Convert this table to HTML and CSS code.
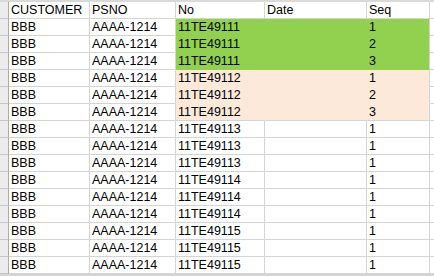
FILE: index.html
```html
<!DOCTYPE html>
<html>
<head>
<meta charset="utf-8">
<link rel="stylesheet" href="styles.css">
</head>
<body>
<div class="sheet">
  <div class="topbar"></div>
  <div class="grid">
    <div class="rh"></div><div class="c">CUSTOMER</div><div class="c">PSNO</div><div class="c">No</div><div class="c">Date</div><div class="c">Seq</div><div class="c x"></div>

    <div class="rh"></div><div class="c">BBB</div><div class="c">AAAA-1214</div><div class="c g">11TE49111</div><div class="c g"></div><div class="c g e">1</div><div class="c x"></div>
    <div class="rh"></div><div class="c">BBB</div><div class="c">AAAA-1214</div><div class="c g">11TE49111</div><div class="c g"></div><div class="c g e">2</div><div class="c x"></div>
    <div class="rh"></div><div class="c">BBB</div><div class="c">AAAA-1214</div><div class="c g">11TE49111</div><div class="c g"></div><div class="c g e">3</div><div class="c x"></div>

    <div class="rh"></div><div class="c">BBB</div><div class="c">AAAA-1214</div><div class="c p">11TE49112</div><div class="c p"></div><div class="c p e">1</div><div class="c x"></div>
    <div class="rh"></div><div class="c">BBB</div><div class="c">AAAA-1214</div><div class="c p">11TE49112</div><div class="c p"></div><div class="c p e">2</div><div class="c x"></div>
    <div class="rh"></div><div class="c">BBB</div><div class="c">AAAA-1214</div><div class="c p last">11TE49112</div><div class="c p last"></div><div class="c p e last">3</div><div class="c x"></div>

    <div class="rh"></div><div class="c">BBB</div><div class="c">AAAA-1214</div><div class="c">11TE49113</div><div class="c"></div><div class="c">1</div><div class="c x"></div>
    <div class="rh"></div><div class="c">BBB</div><div class="c">AAAA-1214</div><div class="c">11TE49113</div><div class="c"></div><div class="c">1</div><div class="c x"></div>
    <div class="rh"></div><div class="c">BBB</div><div class="c">AAAA-1214</div><div class="c">11TE49113</div><div class="c"></div><div class="c">1</div><div class="c x"></div>

    <div class="rh"></div><div class="c">BBB</div><div class="c">AAAA-1214</div><div class="c">11TE49114</div><div class="c"></div><div class="c">1</div><div class="c x"></div>
    <div class="rh"></div><div class="c">BBB</div><div class="c">AAAA-1214</div><div class="c">11TE49114</div><div class="c"></div><div class="c">1</div><div class="c x"></div>
    <div class="rh"></div><div class="c">BBB</div><div class="c">AAAA-1214</div><div class="c">11TE49114</div><div class="c"></div><div class="c">1</div><div class="c x"></div>

    <div class="rh"></div><div class="c">BBB</div><div class="c">AAAA-1214</div><div class="c">11TE49115</div><div class="c"></div><div class="c">1</div><div class="c x"></div>
    <div class="rh"></div><div class="c">BBB</div><div class="c">AAAA-1214</div><div class="c">11TE49115</div><div class="c"></div><div class="c">1</div><div class="c x"></div>
    <div class="rh"></div><div class="c">BBB</div><div class="c">AAAA-1214</div><div class="c">11TE49115</div><div class="c"></div><div class="c">1</div><div class="c x"></div>
  </div>
  <div class="bottombar"></div>
</div>
</body>
</html>
```

FILE: styles.css
```css
html, body {
  margin: 0;
  padding: 0;
  background: #ffffff;
}
.sheet {
  width: 434px;
  height: 276px;
  overflow: hidden;
  display: flex;
  flex-direction: column;
}
.topbar {
  height: 2px;
  flex: none;
  background: #d9d9d9;
  border-bottom: 0;
}
.grid {
  display: grid;
  grid-template-columns: 9px 81px 86px 89px 102px 63px 4px;
  grid-auto-rows: 17px;
  flex: none;
}
.rh {
  box-sizing: border-box;
  background: #ececec;
  border-right: 1px solid #ababab;
  border-bottom: 1px solid #c6c6c6;
}
.c {
  box-sizing: border-box;
  border-right: 1px solid #d4d4d4;
  border-bottom: 1px solid #d4d4d4;
  font-family: "Liberation Sans", Arial, sans-serif;
  font-size: 12.5px;
  line-height: 15px;
  padding: 1px 0 0 2px;
  color: #000;
  white-space: nowrap;
  overflow: hidden;
}
.c.g {
  background: #92d050;
  border-right-color: #92d050;
  border-bottom-color: #92d050;
}
.c.p {
  background: #fde9d9;
  border-right-color: #fde9d9;
  border-bottom-color: #fde9d9;
}
.c.e {
  border-right-color: #d4d4d4;
}
.c.last {
  border-bottom-color: #d4d4d4;
}
.c.x {
  border-right: 0;
}
.bottombar {
  flex: 1;
  background: #d4d4d4;
}
```
